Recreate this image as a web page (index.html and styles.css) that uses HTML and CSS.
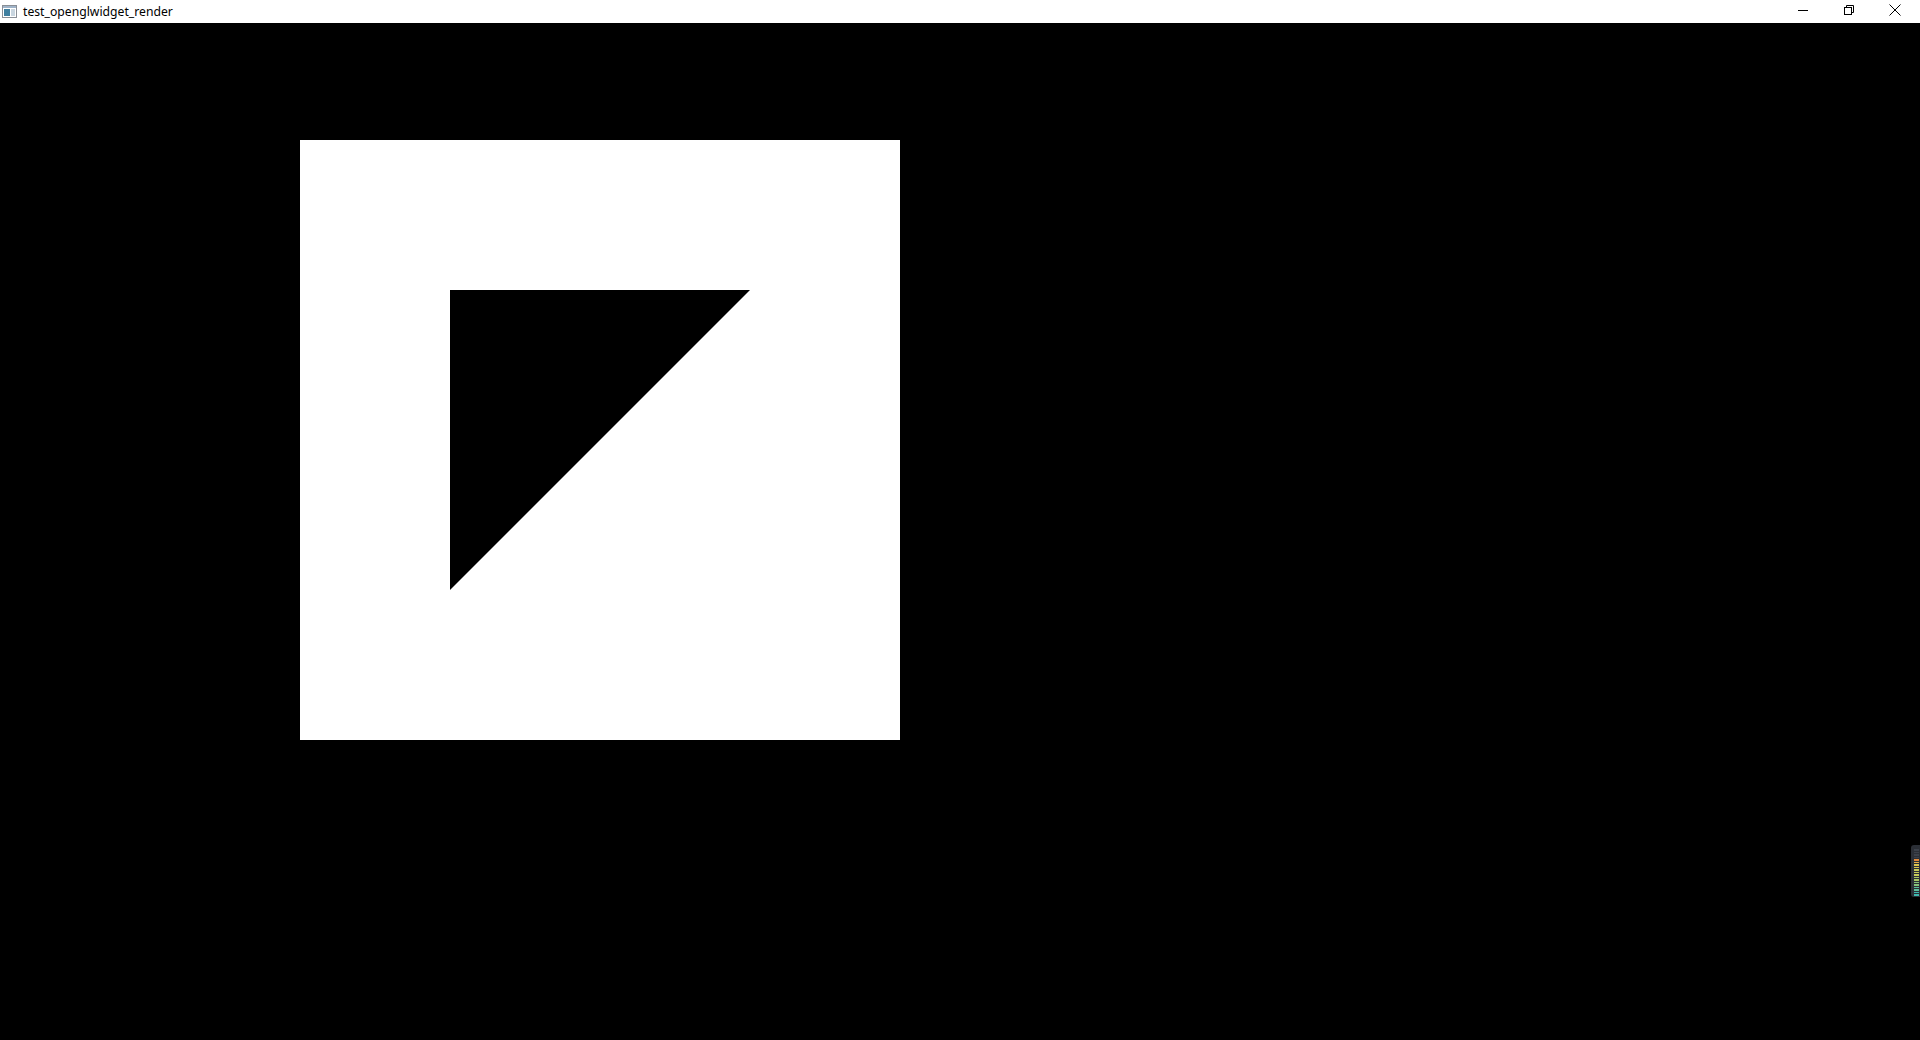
FILE: index.html
```html
<!DOCTYPE html>
<html>
<head>
<meta charset="utf-8">
<link rel="stylesheet" href="styles.css">
</head>
<body>
<div class="window">
  <div class="titlebar">
    <div class="title-left">
      <svg class="app-icon" width="15" height="13" viewBox="0 0 15 13">
        <rect x="0.5" y="0.5" width="14" height="12" fill="#ffffff" stroke="#8a8f96"/>
        <rect x="1" y="1" width="13" height="2" fill="#9fb3c8"/>
        <rect x="2" y="4" width="6" height="7" fill="#3f7f9f"/>
        <rect x="9" y="4" width="4" height="7" fill="#c9d6e0"/>
      </svg>
      <span class="title-text">test_openglwidget_render</span>
    </div>
    <div class="controls">
      <div class="ctl">
        <svg width="12" height="12" viewBox="0 0 12 12"><path d="M1 6.5h10" stroke="#000" stroke-width="1"/></svg>
      </div>
      <div class="ctl">
        <svg width="12" height="12" viewBox="0 0 12 12" fill="none" stroke="#000" stroke-width="1"><rect x="1.5" y="3.5" width="7" height="7"/><path d="M3.5 3.5V1.5h7v7h-2"/></svg>
      </div>
      <div class="ctl">
        <svg width="12" height="12" viewBox="0 0 12 12" fill="none" stroke="#000" stroke-width="1"><path d="M0.5 0.5l11 11M11.5 0.5l-11 11"/></svg>
      </div>
    </div>
  </div>
  <div class="canvas">
    <div class="square">
      <svg class="tri" width="300" height="300" viewBox="0 0 300 300">
        <polygon points="0,0 300,0 0,300" fill="#000"/>
      </svg>
    </div>
    <div class="meter">
      <div class="bar dark"></div>
      <div class="bar dark"></div>
      <div class="bar dark"></div>
      <div class="bar dark"></div>
      <div class="bar c1"></div>
      <div class="bar c2"></div>
      <div class="bar c3"></div>
      <div class="bar c3"></div>
      <div class="bar c4"></div>
      <div class="bar c4"></div>
      <div class="bar c4"></div>
      <div class="bar c5"></div>
      <div class="bar c5"></div>
      <div class="bar c6"></div>
      <div class="bar c6"></div>
      <div class="bar c7"></div>
      <div class="bar c7"></div>
      <div class="bar c8"></div>
      <div class="bar c8"></div>
    </div>
  </div>
</div>
</body>
</html>
```
FILE: styles.css
```css
html, body {
  margin: 0;
  padding: 0;
  width: 1920px;
  height: 1040px;
  overflow: hidden;
  background: #000;
}
.window {
  display: flex;
  flex-direction: column;
  width: 1920px;
  height: 1040px;
}
.titlebar {
  height: 23px;
  background: #fff;
  display: flex;
  align-items: center;
  justify-content: space-between;
  flex-shrink: 0;
}
.title-left {
  display: flex;
  align-items: center;
  padding-left: 2px;
}
.app-icon {
  display: block;
  margin-top: -1px;
}
.title-text {
  margin-left: 6px;
  font-family: "Noto Sans", "Open Sans", sans-serif;
  font-size: 12.2px;
  color: #000;
  line-height: 23px;
  margin-top: -1px;
}
.controls {
  display: flex;
  align-items: center;
  height: 23px;
  padding-right: 2px;
}
.ctl {
  width: 46px;
  height: 23px;
  display: flex;
  align-items: center;
  justify-content: center;
  margin-top: -4px;
}
.canvas {
  flex: 1;
  background: #000;
  position: relative;
  padding-top: 117px;
  padding-left: 300px;
}
.square {
  width: 600px;
  height: 600px;
  background: #fff;
  padding: 150px;
  box-sizing: border-box;
}
.tri {
  display: block;
}
.meter {
  position: absolute;
  left: 1911px;
  top: 822px;
  width: 12px;
  height: 52px;
  background: #2b2f36;
  border-radius: 3px;
  box-sizing: border-box;
  padding: 4px 0 0 3px;
  display: flex;
  flex-direction: column;
  gap: 1px;
}
.bar {
  width: 5px;
  height: 1.5px;
  background: #555;
}
.bar.dark { background: #3c414a; }
.bar.c1 { background: #e0883a; }
.bar.c2 { background: #e6b04a; }
.bar.c3 { background: #d8c450; }
.bar.c4 { background: #c6cc5a; }
.bar.c5 { background: #a8c864; }
.bar.c6 { background: #86c27a; }
.bar.c7 { background: #5fbf9a; }
.bar.c8 { background: #3fb8ad; }
```
